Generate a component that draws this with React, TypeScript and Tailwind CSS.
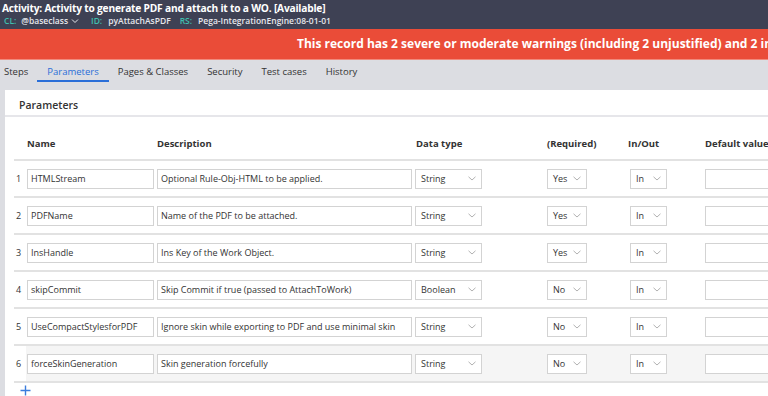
import React from 'react'

const rows = [
  { name: 'HTMLStream', desc: 'Optional Rule-Obj-HTML to be applied.', type: 'String', req: 'Yes' },
  { name: 'PDFName', desc: 'Name of the PDF to be attached.', type: 'String', req: 'Yes' },
  { name: 'InsHandle', desc: 'Ins Key of the Work Object.', type: 'String', req: 'Yes' },
  { name: 'skipCommit', desc: 'Skip Commit if true (passed to AttachToWork)', type: 'Boolean', req: 'No' },
  { name: 'UseCompactStylesforPDF', desc: 'Ignore skin while exporting to PDF and use minimal skin', type: 'String', req: 'No' },
  { name: 'forceSkinGeneration', desc: 'Skin generation forcefully', type: 'String', req: 'No' },
]

const tabs = ['Steps', 'Parameters', 'Pages & Classes', 'Security', 'Test cases', 'History']

function Chevron() {
  return (
    <svg width="8" height="5" viewBox="0 0 8 5" className="shrink-0">
      <path d="M0.5 0.8 L4 4 L7.5 0.8" fill="none" stroke="#a8a8a8" strokeWidth="0.9" />
    </svg>
  )
}

function Select({ value, width }: { value: string; width: string }) {
  return (
    <div className={`flex h-[20px] shrink-0 items-center justify-between border border-[#d3d3d3] bg-white pl-[5px] pr-[5px] ${width}`}>
      <span>{value}</span>
      <Chevron />
    </div>
  )
}

export default function App() {
  return (
    <div className="h-[396px] w-[768px] overflow-hidden bg-[#dcdde2] text-[#333] [font-family:'Open_Sans',sans-serif]">
      <div className="h-[29px] bg-[#3e4154] pl-[2px] pt-[1px]">
        <div className="whitespace-nowrap text-[10.2px] font-bold leading-[14px] tracking-[-0.2px] text-white">
          Activity: Activity to generate PDF and attach it to a WO. [Available]
        </div>
        <div className="flex items-center whitespace-nowrap pl-[2px] text-[8.5px] font-semibold leading-[12px] text-[#e6e7ec]">
          <span className="text-[#3fbfae]">CL:</span>
          <span className="ml-[5px]">@baseclass</span>
          <svg width="8" height="6" viewBox="0 0 8 6" className="ml-[3px]">
            <path d="M1 1.5 L4 4.5 L7 1.5" fill="none" stroke="#e6e7ec" strokeWidth="1" />
          </svg>
          <span className="ml-[12px] text-[#3fbfae]">ID:</span>
          <span className="ml-[6px]">pyAttachAsPDF</span>
          <span className="ml-[9px] text-[#3fbfae]">RS:</span>
          <span className="ml-[6px]">Pega-IntegrationEngine:08-01-01</span>
        </div>
      </div>
      <div className="flex h-[31px] items-center overflow-hidden whitespace-nowrap border-b border-[#f08a7c] bg-[#ea4c38] pl-[297px] text-[12px] font-bold text-white">
        This record has 2 severe or moderate warnings (including 2 unjustified) and 2 informational warnings
      </div>
      <div className="flex h-[30px] items-start gap-[19px] pl-[4px] pt-[5px] text-[9.5px]">
        {tabs.map((t) => (
          <div key={t} className="relative whitespace-nowrap">
            <span className={t === 'Parameters' ? 'text-[#2a6ed8]' : ''}>{t}</span>
            {t === 'Parameters' && <div className="absolute -left-[10px] -right-[10px] top-[15px] h-[2px] bg-[#2a6ed8]" />}
          </div>
        ))}
      </div>
      <div className="ml-[5px] h-[306px] overflow-hidden bg-white">
        <div className="flex h-[27px] items-center border-b-2 border-[#e6e6ea] pl-[14px] pt-[7px] text-[10.5px] font-semibold text-[#333]">
          Parameters
        </div>
        <div className="w-[900px] pl-[9px] pt-[12px] text-[9px]">
          <div className="flex h-[32px] items-center border-b-2 border-[#e2e2e2] pl-[13px] text-[9.5px] font-bold text-[#333]">
            <span className="w-[130px] shrink-0">Name</span>
            <span className="w-[259px] shrink-0">Description</span>
            <span className="w-[131px] shrink-0">Data type</span>
            <span className="w-[81px] shrink-0">(Required)</span>
            <span className="w-[77px] shrink-0">In/Out</span>
            <span className="shrink-0 whitespace-nowrap">Default value</span>
          </div>
          {rows.map((r, i) => (
            <div key={r.name} className={`flex h-[37px] items-center border-b-2 border-[#e2e2e2] ${i === 5 ? 'bg-[linear-gradient(to_right,white_12px,#f5f5f5_12px)]' : ''}`}>
              <span className="w-[13px] shrink-0 pl-[2px]">{i + 1}</span>
              <div className="flex h-[20px] w-[127px] shrink-0 items-center overflow-hidden whitespace-nowrap border border-[#d3d3d3] bg-white pl-[3px]">{r.name}</div>
              <div className="ml-[3px] flex h-[20px] w-[255px] shrink-0 items-center overflow-hidden whitespace-nowrap border border-[#d3d3d3] bg-white pl-[3px]">{r.desc}</div>
              <div className="ml-[3px] shrink-0"><Select value={r.type} width="w-[67px]" /></div>
              <div className="ml-[65px] shrink-0"><Select value={r.req} width="w-[40px]" /></div>
              <div className="ml-[43px] shrink-0"><Select value="In" width="w-[37px]" /></div>
              <div className="ml-[38px] h-[20px] w-[100px] shrink-0 border border-[#d3d3d3] bg-white" />
            </div>
          ))}
          <div className="pl-[6px] pt-[2px]">
            <svg width="11" height="11" viewBox="0 0 11 11">
              <path d="M5.5 0.5 V10.5 M0.5 5.5 H10.5" stroke="#3b7ddd" strokeWidth="1.4" />
            </svg>
          </div>
        </div>
      </div>
    </div>
  )
}
